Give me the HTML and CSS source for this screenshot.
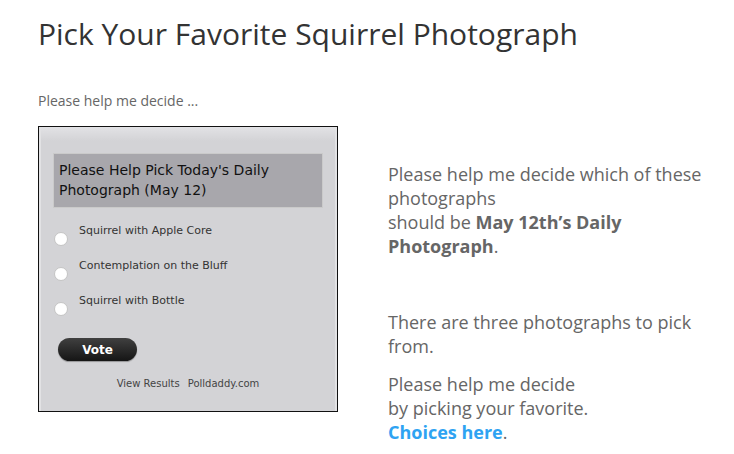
FILE: index.html
```html
<!DOCTYPE html>
<html lang="en">
<head>
<meta charset="utf-8">
<title>Pick Your Favorite Squirrel Photograph</title>
<link rel="stylesheet" href="styles.css">
</head>
<body>
<main class="page">
  <h1 class="title">Pick Your Favorite Squirrel Photograph</h1>
  <p class="intro">Please help me decide ...</p>
  <div class="row">
    <form class="poll">
      <div class="poll-inner">
        <div class="question">Please Help Pick Today's Daily Photograph (May 12)</div>
        <ul class="options">
          <li class="option"><input class="radio" type="radio" name="pick" id="o1"><label for="o1">Squirrel with Apple Core</label></li>
          <li class="option"><input class="radio" type="radio" name="pick" id="o2"><label for="o2">Contemplation on the Bluff</label></li>
          <li class="option"><input class="radio" type="radio" name="pick" id="o3"><label for="o3">Squirrel with Bottle</label></li>
        </ul>
        <button class="vote" type="button">Vote</button>
        <div class="poll-foot"><a href="#">View Results</a><a href="#">Polldaddy.com</a></div>
      </div>
    </form>
    <div class="side">
      <p>Please help me decide which of these photographs<br>should be <strong>May 12th’s Daily</strong><br><strong>Photograph</strong>.</p>
      <p>&nbsp;</p>
      <p>There are three photographs to pick<br>from.</p>
      <p>Please help me decide<br>by picking your favorite.<br><a class="link" href="#">Choices here</a>.</p>
    </div>
  </div>
</main>
</body>
</html>
```
FILE: styles.css
```css
* { box-sizing: border-box; }
html, body { margin: 0; padding: 0; background: #fff; }
body { font-family: "Open Sans", "Liberation Sans", sans-serif; color: #666; }
.page { padding: 14px 0 0 38px; }
.title {
  margin: 0;
  font-size: 30px;
  line-height: 40px;
  font-weight: 400;
  color: #333;
}
.intro {
  margin: 37px 0 0;
  font-size: 14px;
  line-height: 20px;
  color: #666;
}
.row {
  display: flex;
  align-items: flex-start;
  margin-top: 15px;
  gap: 50px;
}
.poll {
  width: 300px;
  height: 286px;
  border: 1px solid #111;
  background: #d3d3d6;
  font-family: "DejaVu Sans", Verdana, sans-serif;
  flex: none;
}
.poll-inner {
  height: 100%;
  border-left: 2px solid #e2e2e4;
  border-right: 2px solid #e2e2e4;
  background: linear-gradient(#e2e2e5 0, #d3d3d6 14px);
  padding: 26px 12px 0 12px;
}
.question {
  background: #a8a7ac;
  border: 1px solid #cacaca;
  padding: 6px 5px 7px 5px;
  font-size: 14px;
  line-height: 20px;
  color: #111;
}
.options { list-style: none; margin: 15px 0 0; padding: 0; }
.option {
  display: flex;
  align-items: flex-start;
  height: 35px;
  font-size: 11px;
  color: #333;
}
.radio {
  appearance: none;
  -webkit-appearance: none;
  width: 14px;
  height: 14px;
  margin: 9px 11px 0 1px;
  border-radius: 50%;
  background: #fff;
  border: 1px solid #c4c4c4;
  flex: none;
}
.option label { line-height: 14px; padding-top: 1px; }
.vote {
  display: block;
  margin: 10px 0 0 5px;
  width: 79px;
  height: 23px;
  border: none;
  border-radius: 12px;
  background: linear-gradient(#404040, #151515);
  color: #fff;
  font-family: "DejaVu Sans", Verdana, sans-serif;
  font-weight: bold;
  font-size: 12px;
  padding: 0;
  box-shadow: 0 1px 1px rgba(0,0,0,0.3);
}
.poll-foot {
  margin-top: 17px;
  display: flex;
  justify-content: center;
  gap: 8px;
  font-size: 10px;
}
.poll-foot a { color: #444; text-decoration: none; }
.side {
  width: 330px;
  padding-top: 36px;
  font-size: 18px;
  line-height: 24px;
  color: #666;
}
.side p { margin: 0 0 14px; }
.side strong { font-weight: 700; color: #666; line-height: 1; }
.link { color: #2ea3f2; font-weight: 700; text-decoration: none; line-height: 1; }
```
